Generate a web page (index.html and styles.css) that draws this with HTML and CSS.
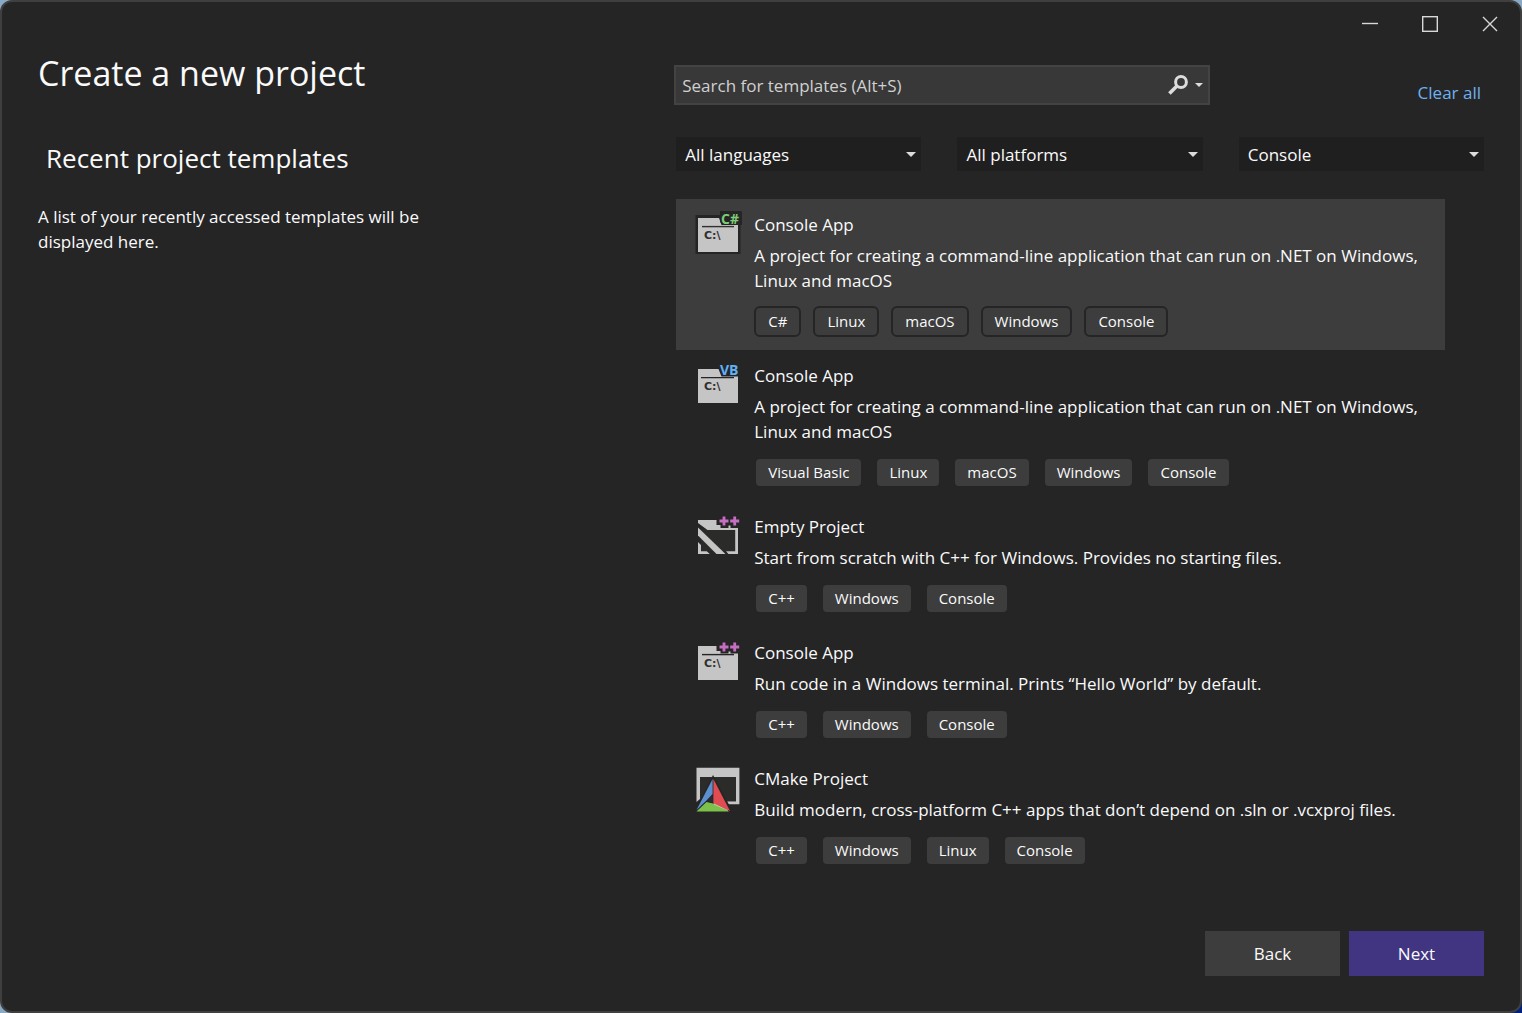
FILE: index.html
```html
<!DOCTYPE html>
<html lang="en">
<head>
<meta charset="UTF-8">
<meta name="viewport" content="width=device-width, initial-scale=1.0">
<title>Create a new project</title>
<link rel="stylesheet" href="styles.css">
</head>
<body>
<div class="window">
  <div class="titlebar">
    <button type="button" aria-label="Minimize">
      <svg width="16" height="16" viewBox="0 0 16 16"><path d="M0 7.5h16" stroke="#d8d8d8" stroke-width="1.4"/></svg>
    </button>
    <button type="button" aria-label="Maximize">
      <svg width="16" height="16" viewBox="0 0 16 16"><rect x=".7" y=".7" width="14.6" height="14.6" fill="none" stroke="#d8d8d8" stroke-width="1.4"/></svg>
    </button>
    <button type="button" aria-label="Close">
      <svg width="16" height="16" viewBox="0 0 16 16"><path d="M1 1l14 14M15 1L1 15" stroke="#d8d8d8" stroke-width="1.4"/></svg>
    </button>
  </div>

  <main class="content">
    <section class="recent">
      <h1>Create a new project</h1>
      <h2>Recent project templates</h2>
      <p>A list of your recently accessed templates will be displayed here.</p>
    </section>

    <section class="templates">
      <div class="search-row">
        <div class="search-box">
          <input type="text" placeholder="Search for templates (Alt+S)" aria-label="Search for templates">
          <button type="button" class="search-button" aria-label="Search">
            <svg width="20" height="20" viewBox="0 0 20 20"><circle cx="13" cy="7" r="5.4" fill="none" stroke="#dcdcdc" stroke-width="3"/><path d="M9.2 10.8L1.4 18.6" stroke="#dcdcdc" stroke-width="3.6"/></svg>
          </button>
          <button type="button" class="search-options" aria-label="Search options">
            <svg width="8" height="4" viewBox="0 0 8 4"><path d="M0 0h8L4 4z" fill="#dcdcdc"/></svg>
          </button>
        </div>
        <a class="clear" href="#">Clear all</a>
      </div>

      <div class="filters">
        <div class="filter">
          <select aria-label="Language"><option>All languages</option></select>
        </div>
        <div class="filter">
          <select aria-label="Platform"><option>All platforms</option></select>
        </div>
        <div class="filter">
          <select aria-label="Project type"><option>Console</option></select>
        </div>
      </div>

      <ul class="template-list">
        <li class="template selected">
          <svg class="icon" width="48" height="48" viewBox="0 0 48 48">
            <path d="M1.5 3H26V-1H46Q48 -1 48 1V13H46.5V42H1.5z" fill="#252526"/>
            <path d="M4 6H25L27.5 13H44V40H4z" fill="#c5c5c5"/>
            <path d="M8 14.6H40" stroke="#30302f" stroke-width="1.4"/>
            <path d="M27 -1H46Q48 -1 48 1V11Q48 13 46 13H30Q27 13 26 9V1Q26 -1 27 -1z" fill="#252526"/>
            <text class="prompt" x="10" y="27">C:\</text>
            <text class="badge csharp" x="27" y="12">C#</text>
          </svg>
          <div class="details">
            <h3>Console App</h3>
            <p>A project for creating a command-line application that can run on .NET on Windows, Linux and macOS</p>
            <ul class="tags">
              <li>C#</li>
              <li>Linux</li>
              <li>macOS</li>
              <li>Windows</li>
              <li>Console</li>
            </ul>
          </div>
        </li>

        <li class="template">
          <svg class="icon" width="48" height="48" viewBox="0 0 48 48">
            <path d="M4 6H24.5L27.5 13.5H44V40H4z" fill="#c5c5c5"/>
            <path d="M7 14.6H40" stroke="#252526" stroke-width="1.4"/>
            <text class="prompt" x="10" y="27">C:\</text>
            <text class="badge vb" x="26" y="12">VB</text>
          </svg>
          <div class="details">
            <h3>Console App</h3>
            <p>A project for creating a command-line application that can run on .NET on Windows, Linux and macOS</p>
            <ul class="tags">
              <li>Visual Basic</li>
              <li>Linux</li>
              <li>macOS</li>
              <li>Windows</li>
              <li>Console</li>
            </ul>
          </div>
        </li>

        <li class="template">
          <svg class="icon" width="48" height="48" viewBox="0 0 48 48">
            <path d="M7 15H41V37H7z" fill="#2b2b29"/>
            <path d="M4 6H22.5V11H26.5V14H44V40H34.5L32 37.2H41.2V16H13.5L4 9z" fill="#c5c5c5"/>
            <path d="M4 13.5L31.5 40H22.5L4 21.5z" fill="#c5c5c5"/>
            <path d="M4 28L7 31V37.2H12.8L15.8 40H4z" fill="#c5c5c5"/>
            <path d="M34.5 11.5h2V14h-2z" fill="#c5c5c5"/>
            <path d="M25.5 7H34.5M30 2.5V11.5M36.2 7H45.2M40.7 2.5V11.5" stroke="#c56ec2" stroke-width="2.8"/>
          </svg>
          <div class="details">
            <h3>Empty Project</h3>
            <p>Start from scratch with C++ for Windows. Provides no starting files.</p>
            <ul class="tags">
              <li>C++</li>
              <li>Windows</li>
              <li>Console</li>
            </ul>
          </div>
        </li>

        <li class="template">
          <svg class="icon" width="48" height="48" viewBox="0 0 48 48">
            <path d="M4 6H22.5V11H26.5V13.5H34.5V11.5H36.5V13.5H44V40H4z" fill="#c5c5c5"/>
            <path d="M8 14.6H40" stroke="#252526" stroke-width="1.4"/>
            <text class="prompt" x="10" y="27">C:\</text>
            <path d="M25.5 7H34.5M30 2.5V11.5M36.2 7H45.2M40.7 2.5V11.5" stroke="#c56ec2" stroke-width="2.8"/>
          </svg>
          <div class="details">
            <h3>Console App</h3>
            <p>Run code in a Windows terminal. Prints “Hello World” by default.</p>
            <ul class="tags">
              <li>C++</li>
              <li>Windows</li>
              <li>Console</li>
            </ul>
          </div>
        </li>

        <li class="template">
          <svg class="icon" width="48" height="48" viewBox="0 0 48 48">
            <path d="M2.5 1.8H45.4V38.3H34L32 35.2H42V11H6V33L2.5 36z" fill="#c5c5c5"/>
            <path d="M6 11H42V35.2H6z" fill="#2b2b29"/>
            <path d="M19 9L0 46H39z" fill="#252526"/>
            <path d="M18.6 13L2.5 44L12 35L18.6 28z" fill="#5b8fd0"/>
            <path d="M19.4 13L36 45L19.4 37.5z" fill="#e04c50"/>
            <path d="M2.5 45.5L12.5 36L20 37.8L35 45.5z" fill="#7cc24a"/>
            <path d="M18.8 29V37L12.8 35.2z" fill="#292c33"/>
            <path d="M20 38L34 44.5" stroke="#e9d9c8" stroke-width=".8"/>
          </svg>
          <div class="details">
            <h3>CMake Project</h3>
            <p>Build modern, cross-platform C++ apps that don’t depend on .sln or .vcxproj files.</p>
            <ul class="tags">
              <li>C++</li>
              <li>Windows</li>
              <li>Linux</li>
              <li>Console</li>
            </ul>
          </div>
        </li>
      </ul>
    </section>
  </main>

  <footer class="actions">
    <button type="button">Back</button>
    <button type="button" class="primary">Next</button>
  </footer>
</div>
</body>
</html>
```

FILE: styles.css
```css
* {
  margin: 0;
  padding: 0;
  box-sizing: border-box;
}

body {
  font-family: "Open Sans", "Noto Sans", sans-serif;
  font-size: 17px;
  line-height: 25px;
  color: #fafafa;
  background: linear-gradient(to bottom right, #8aa9c4 60%, #00207c);
}

button,
input,
select {
  font: inherit;
  color: inherit;
  background: none;
  border: none;
}

ul {
  list-style: none;
}

h1, h2, h3 {
  font-size: inherit;
  font-weight: normal;
}

.window {
  display: flex;
  flex-direction: column;
  min-height: 100vh;
  background-color: #252526;
  border: 2px solid #3f3f3f;
  border-radius: 12px;
}

/* title bar */
.titlebar {
  display: flex;
  justify-content: flex-end;
  height: 44px;
}

.titlebar button {
  display: flex;
  align-items: center;
  justify-content: center;
  width: 60px;
}

.content {
  display: grid;
  grid-template-columns: 44% minmax(0, 1fr);
  padding: 0 36px;
}

/* left column */
.recent h1 {
  font-size: 34px;
  line-height: 54px;
}

.recent h2 {
  margin-top: 40px;
  padding-left: 8px;
  font-size: 26px;
  line-height: 36px;
}

.recent p {
  max-width: 410px;
  margin-top: 28px;
}

/* search and filters */
.templates {
  padding-top: 19px;
}

.search-row {
  display: flex;
  align-items: flex-end;
  justify-content: space-between;
}

.search-box {
  display: flex;
  align-items: center;
  width: 536px;
  height: 40px;
  background-color: #383838;
  border: 2px solid #434343;
}

.search-box input {
  flex: 1;
  min-width: 0;
  height: 100%;
  padding-left: 6px;
}

.search-box input::placeholder {
  color: #d0d0d0;
  opacity: 1;
}

.search-button {
  width: 24px;
}

.search-options {
  display: flex;
  align-items: center;
  justify-content: center;
  width: 18px;
  height: 24px;
}

.search-button svg {
  display: block;
  margin: 0 auto;
}

.clear {
  padding-right: 3px;
  color: #6fb1f0;
  text-decoration: none;
}

.filters {
  display: grid;
  grid-template-columns: repeat(3, 1fr);
  gap: 36px;
  margin: 32px 0 28px 2px;
}

.filter {
  position: relative;
}

.filter select {
  display: block;
  width: 100%;
  height: 34px;
  padding: 0 24px 0 9px;
  background-color: #1f1f1f;
  appearance: none;
}

.filter::after {
  content: "";
  position: absolute;
  top: 15px;
  right: 5px;
  border: 5px solid transparent;
  border-top-color: #dcdcdc;
  border-bottom: none;
  pointer-events: none;
}

/* template list */
.template-list {
  margin: 0 39px 0 2px;
}

.template {
  display: flex;
  gap: 12px;
  padding: 13px 13px 13px 18px;
}

.template.selected {
  background-color: #3d3d3d;
}

.icon {
  flex: none;
  overflow: visible;
}

.prompt {
  font: bold 11px "DejaVu Sans", sans-serif;
  fill: #30302f;
}

.badge {
  font: bold 14px "Open Sans", sans-serif;
}

.csharp {
  fill: #7ccb76;
}

.vb {
  fill: #62b0f5;
}

.details p {
  margin-top: 6px;
}

.tags {
  display: flex;
  flex-wrap: wrap;
  gap: 12px;
  margin-top: 13px;
}

.tags li {
  padding: 0 12px;
  font-size: 15px;
  line-height: 27px;
  background-color: #3d3d3d;
  border: 2px solid #252526;
  border-radius: 6px;
}

/* bottom buttons */
.actions {
  display: flex;
  justify-content: flex-end;
  gap: 9px;
  margin-top: auto;
  padding: 35px 36px;
}

.actions button {
  width: 135px;
  height: 45px;
  background-color: #3d3d3d;
}

.actions .primary {
  background-color: #413582;
}
```
